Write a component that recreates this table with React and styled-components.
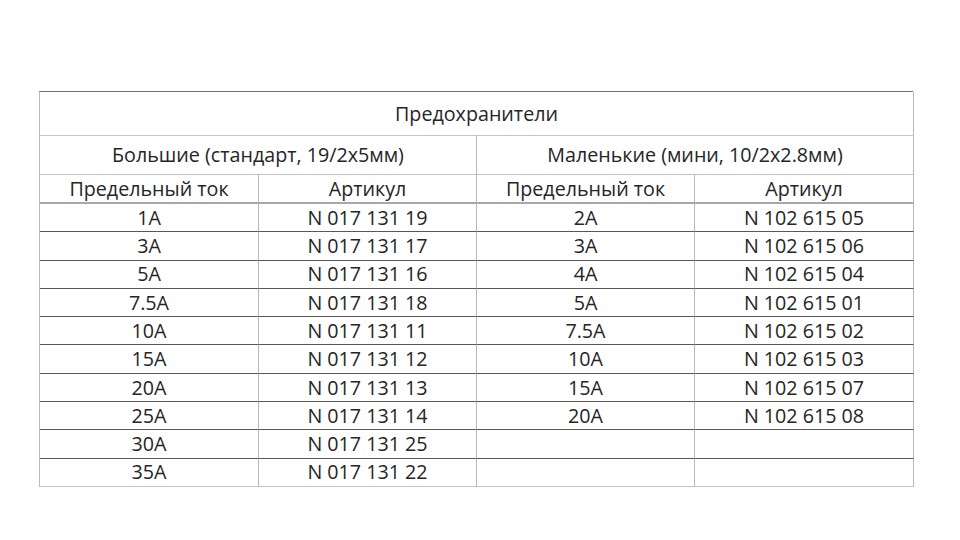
import React from "react";
import styled, { createGlobalStyle } from "styled-components";

const Global = createGlobalStyle`
  html, body { margin: 0; padding: 0; background: #ffffff; }
  body { width: 960px; height: 540px; overflow: hidden; }
`;

const Page = styled.div`
  width: 960px;
  height: 540px;
  box-sizing: border-box;
  padding: 91px 0 0 39px;
  font-family: "Open Sans", "Liberation Sans", sans-serif;
  color: #252525;
`;

const Grid = styled.div`
  display: grid;
  width: 874px;
  grid-template-columns: 219px 218px 218px 219px;
  grid-template-rows: 44px 39px 29px repeat(10, 28.3px);
  border-top: 1px solid #707070;
  border-left: 1px solid #b8b8b8;
  box-sizing: border-box;
`;

const Cell = styled.div`
  grid-column: ${(p) => (p.span ? `span ${p.span}` : "auto")};
  display: flex;
  align-items: center;
  justify-content: center;
  box-sizing: border-box;
  border-right: 1px solid #b8b8b8;
  border-bottom: ${(p) =>
    p.line === "dark"
      ? "1px solid #585858"
      : p.line === "mid"
      ? "2px solid #a8a8a8"
      : "1px solid #c4c4c4"};
  font-size: 19.7px;
  line-height: 1;
  white-space: nowrap;
  padding-top: ${(p) => (p.line === "mid" ? "1px" : "0")};
`;

const big = [
  ["1A", "N 017 131 19"],
  ["3A", "N 017 131 17"],
  ["5A", "N 017 131 16"],
  ["7.5A", "N 017 131 18"],
  ["10A", "N 017 131 11"],
  ["15A", "N 017 131 12"],
  ["20A", "N 017 131 13"],
  ["25A", "N 017 131 14"],
  ["30A", "N 017 131 25"],
  ["35A", "N 017 131 22"],
];

const mini = [
  ["2A", "N 102 615 05"],
  ["3A", "N 102 615 06"],
  ["4A", "N 102 615 04"],
  ["5A", "N 102 615 01"],
  ["7.5A", "N 102 615 02"],
  ["10A", "N 102 615 03"],
  ["15A", "N 102 615 07"],
  ["20A", "N 102 615 08"],
  ["", ""],
  ["", ""],
];

export default function App() {
  return (
    <Page>
      <Global />
      <Grid>
        <Cell span={4}>Предохранители</Cell>
        <Cell span={2}>Большие (стандарт, 19/2x5мм)</Cell>
        <Cell span={2}>Маленькие (мини, 10/2x2.8мм)</Cell>
        <Cell line="mid">Предельный ток</Cell>
        <Cell line="mid">Артикул</Cell>
        <Cell line="mid">Предельный ток</Cell>
        <Cell line="mid">Артикул</Cell>
        {big.map((b, i) => {
          const m = mini[i];
          const line = i === big.length - 1 ? "light" : "dark";
          return (
            <React.Fragment key={i}>
              <Cell line={line}>{b[0]}</Cell>
              <Cell line={line}>{b[1]}</Cell>
              <Cell line={line}>{m[0]}</Cell>
              <Cell line={line}>{m[1]}</Cell>
            </React.Fragment>
          );
        })}
      </Grid>
    </Page>
  );
}
